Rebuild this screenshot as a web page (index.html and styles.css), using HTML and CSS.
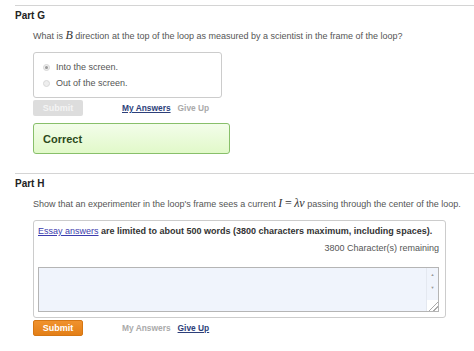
FILE: index.html
```html
<!DOCTYPE html>
<html lang="en">
<head>
  <meta charset="UTF-8">
  <title>Parts G and H</title>
  <link rel="stylesheet" href="styles.css">
</head>
<body>
  <div class="part">
    <h2 class="part-title">Part G</h2>
    <div class="part-body">
      <p class="question">What is <i class="math">B</i> direction at the top of the loop as measured by a scientist in the frame of the loop?</p>
      <div class="choices">
        <label class="choice"><span class="radio checked"></span>Into the screen.</label>
        <label class="choice"><span class="radio"></span>Out of the screen.</label>
      </div>
      <div class="actions">
        <button class="btn btn-disabled">Submit</button>
        <a class="link link-on" href="#">My Answers</a>
        <span class="link link-off">Give Up</span>
      </div>
      <div class="feedback">Correct</div>
    </div>
  </div>

  <div class="part">
    <h2 class="part-title">Part H</h2>
    <div class="part-body">
      <p class="question">Show that an experimenter in the loop's frame sees a current <i class="math">I</i> <span class="math-op">=</span> <i class="math">&lambda;v</i> passing through the center of the loop.</p>
      <div class="essay">
        <p class="essay-note"><a class="essay-link" href="#">Essay answers</a> are limited to about 500 words (3800 characters maximum, including spaces).</p>
        <p class="essay-count">3800 Character(s) remaining</p>
        <div class="essay-input">
          <div class="essay-text"></div>
          <div class="scrollbar">
            <span class="arrow">&#9650;</span>
            <span class="arrow">&#9660;</span>
            <span class="grip"></span>
          </div>
        </div>
      </div>
      <div class="actions">
        <button class="btn btn-orange">Submit</button>
        <span class="link link-off">My Answers</span>
        <a class="link link-on" href="#">Give Up</a>
      </div>
    </div>
  </div>
  <div class="part last"></div>
</body>
</html>
```

FILE: styles.css
```css
html, body {
  margin: 0;
  padding: 0;
  background: #fff;
  font-family: 'Liberation Sans', Arial, sans-serif;
  color: #444;
}
/* each part starts with a grey rule */
.part {
  margin-left: 15px;
  border-top: 1px solid #d4d4d4;
  padding-top: 3px;
  padding-bottom: 19px;
}
.part:first-child {
  margin-top: 5px;
}
.part + .part {
  padding-bottom: 15px;
}
.part.last {
  padding: 0;
  border-top-color: #e6e6e6;
}
.part-title {
  margin: 0;
  font-size: 10px;
  font-weight: bold;
  color: #222;
  line-height: 14px;
}
.part-body {
  padding-left: 18px;
}
.question {
  margin: 6px 0 9px 0;
  font-size: 9px;
  line-height: 13px;
  color: #555;
}
.math {
  font-family: 'Liberation Serif', 'Times New Roman', serif;
  font-size: 12px;
  color: #333;
}
.math-op {
  font-family: 'Liberation Serif', serif;
  font-size: 12px;
  color: #333;
}
/* radio choices */
.choices {
  width: 178px;
  border: 1px solid #ccc;
  border-radius: 3px;
  padding: 8px 0 7px 9px;
  display: flex;
  flex-direction: column;
  gap: 3px;
}
.choice {
  display: flex;
  align-items: center;
  font-size: 9px;
  line-height: 13px;
  color: #555;
}
.radio {
  width: 7px;
  height: 7px;
  border-radius: 50%;
  border: 1px solid #d8d8d8;
  background: #eee;
  margin-right: 6px;
  box-sizing: border-box;
  display: flex;
  align-items: center;
  justify-content: center;
}
.radio.checked::after {
  content: "";
  width: 3px;
  height: 3px;
  border-radius: 50%;
  background: #999;
}
/* submit row */
.actions {
  display: flex;
  align-items: center;
  margin-top: 2px;
  height: 16px;
}
.btn {
  width: 50px;
  height: 16px;
  border: none;
  border-radius: 2px;
  font-family: inherit;
  font-size: 9px;
  font-weight: bold;
  color: #fff;
  padding: 0;
  margin-right: 39px;
}
.btn-disabled {
  background: #ddd;
  color: #f4f4f4;
}
.btn-orange {
  background: linear-gradient(#f0922e, #e37f17);
  border: 1px solid #d57613;
}
.link {
  font-size: 8.4px;
  font-weight: bold;
  margin-right: 7px;
}
.link-on {
  color: #2d3f7a;
  text-decoration: underline;
}
.link-off {
  color: #aaa;
}
.feedback {
  margin-top: 7px;
  width: 186px;
  height: 29px;
  border: 1px solid #88bf6a;
  border-radius: 3px;
  background: linear-gradient(#f3fdea, #e1f9c9);
  padding-left: 9px;
  display: flex;
  align-items: center;
  font-size: 11px;
  font-weight: bold;
  color: #2c4a1a;
}
/* essay area */
.essay {
  width: 401px;
  border: 1px solid #ccc;
  border-radius: 3px;
  padding: 4px 6px 5px 4px;
}
.essay-note {
  margin: 0;
  font-size: 9px;
  font-weight: bold;
  line-height: 12px;
  color: #333;
}
.essay-link {
  color: #3c3cae;
  font-weight: normal;
  text-decoration: underline;
}
.essay-count {
  margin: 5px 0 0 0;
  text-align: right;
  font-size: 9px;
  line-height: 12px;
  color: #555;
}
.essay-input {
  margin-top: 13px;
  display: flex;
  height: 43px;
  border: 1px solid #b5b5b5;
  background: #f0f4fc;
}
.essay-text {
  flex: 1;
}
.scrollbar {
  width: 11px;
  display: flex;
  flex-direction: column;
  align-items: center;
  background: #f0f4fc;
  border-left: 1px solid #e4e8f0;
}
.arrow {
  font-size: 4px;
  color: #999;
  line-height: 13px;
}
.grip {
  margin-top: auto;
  width: 11px;
  height: 11px;
  background: linear-gradient(135deg, transparent 55%, #aaa 55%, #aaa 62%, transparent 62%, transparent 75%, #aaa 75%, #aaa 82%, transparent 82%);
  background-color: #fff;
}
```
